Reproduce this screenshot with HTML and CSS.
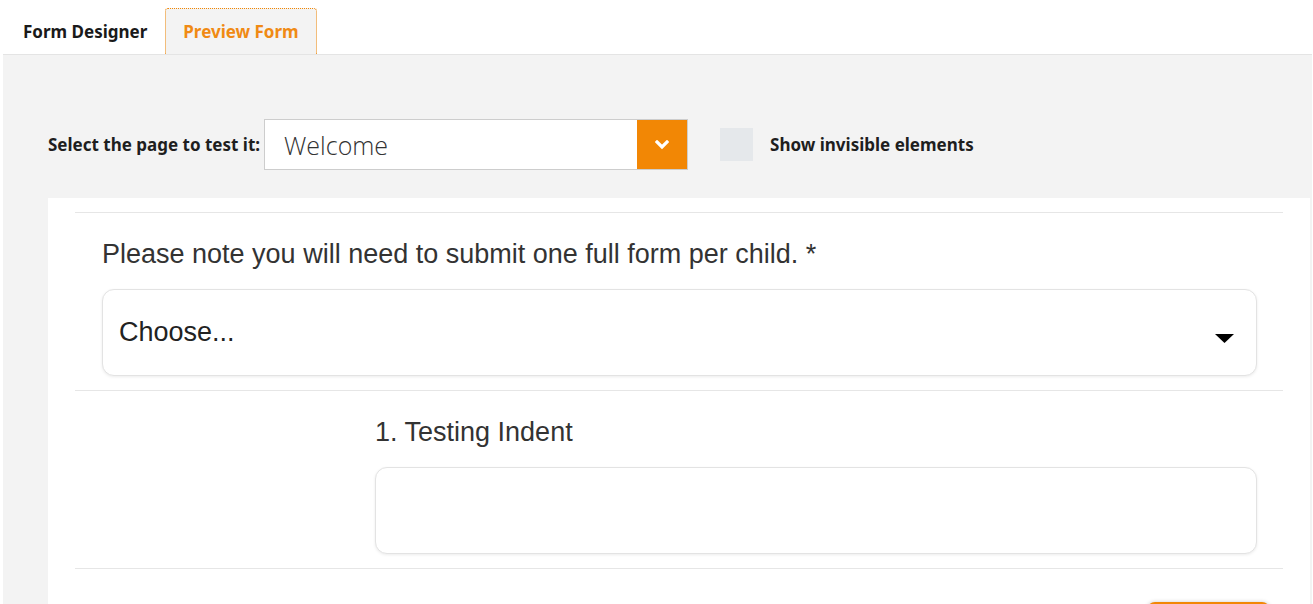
FILE: index.html
```html
<!DOCTYPE html>
<html>
<head>
<meta charset="utf-8">
<link rel="stylesheet" href="styles.css">
</head>
<body>
<div class="app">
  <div class="tabs">
    <div class="tab">Form Designer</div>
    <div class="tab active">Preview Form</div>
  </div>
  <div class="panel">
    <div class="toolbar">
      <span class="tool-label">Select the page to test it:</span>
      <div class="page-select">
        <span class="page-value">Welcome</span>
        <span class="page-btn">
          <svg width="14" height="10" viewBox="0 0 14 10"><path d="M2 2 L7 7 L12 2" fill="none" stroke="#fff" stroke-width="3.2" stroke-linecap="square"/></svg>
        </span>
      </div>
      <span class="check"></span>
      <span class="tool-label">Show invisible elements</span>
    </div>
    <div class="card">
      <div class="row">
        <div class="q-title">Please note you will need to submit one full form per child. *</div>
        <div class="dropdown">
          <span>Choose...</span>
          <svg class="caret" width="19" height="9" viewBox="0 0 19 9"><path d="M0 0 H19 L9.5 9 Z" fill="#000"/></svg>
        </div>
      </div>
      <div class="row indent">
        <div class="q-title">1. Testing Indent</div>
        <div class="text-input"></div>
      </div>
      <div class="row footer">
        <div class="next-btn"></div>
      </div>
    </div>
  </div>
</div>
</body>
</html>
```
FILE: styles.css
```css
html, body {
  margin: 0;
  padding: 0;
  background: #fff;
  overflow: hidden;
}
body {
  font-family: "Noto Sans", "Open Sans", sans-serif;
  color: #1e1e1e;
}
.app {
  margin-left: 3px;
  width: 1309px;
  height: 604px;
  display: flex;
  flex-direction: column;
}
.tabs {
  display: flex;
  align-items: flex-end;
  height: 54px;
  border-bottom: 1px solid #e4e4e4;
  padding-left: 5px;
}
.tab {
  height: 46px;
  box-sizing: border-box;
  display: flex;
  align-items: center;
  padding: 0 15px;
  font-size: 17px;
  font-weight: 700;
  color: #1a1a1a;
  margin-right: 3px;
}
.tab.active {
  background: #f3f3f3;
  color: #f08a14;
  border: 1px dotted #f28705;
  border-bottom: none;
  border-radius: 3px 3px 0 0;
  padding: 0 17px;
}
.panel {
  flex: 1;
  background: #f3f3f3;
  padding-left: 45px;
  display: flex;
  flex-direction: column;
  min-height: 0;
}
.toolbar {
  display: flex;
  align-items: center;
  height: 51px;
  margin-top: 64px;
  margin-bottom: 28px;
}
.tool-label {
  font-size: 17px;
  font-weight: 700;
  color: #1e1e1e;
}
.page-select {
  margin-left: 4px;
  width: 424px;
  height: 51px;
  box-sizing: border-box;
  border: 1px solid #cdcdcd;
  background: #fff;
  display: flex;
  align-items: center;
}
.page-value {
  flex: 1;
  padding-left: 19px;
  font-family: "Open Sans", sans-serif;
  font-weight: 300;
  font-size: 25px;
  color: #333;
}
.page-btn {
  width: 50px;
  height: 49px;
  background: #f28705;
  display: flex;
  align-items: center;
  justify-content: center;
}
.check {
  width: 33px;
  height: 33px;
  background: #e5e8eb;
  margin-left: 32px;
  margin-right: 17px;
}
.card {
  flex: 1;
  background: #fff;
  padding: 14px 27px 0 27px;
  margin-right: 2px;
  min-height: 0;
}
.row {
  border-top: 1px solid #e6e6e6;
  padding: 26px 26px 14px 27px;
}
.row.indent {
  padding-left: 300px;
}
.q-title {
  font-family: "Liberation Sans", Arial, sans-serif;
  font-size: 27px;
  line-height: 31px;
  color: #333;
  margin-bottom: 19px;
}
.dropdown, .text-input {
  height: 87px;
  box-sizing: border-box;
  border: 1px solid #e3e3e3;
  border-radius: 12px;
  box-shadow: 0 1px 3px rgba(0,0,0,0.08);
  background: #fff;
}
.dropdown {
  display: flex;
  align-items: center;
  justify-content: space-between;
  padding: 0 22px 0 16px;
  font-family: "Liberation Sans", Arial, sans-serif;
  font-size: 27px;
  color: #222;
}
.caret {
  margin-top: 12px;
}
.row.footer {
  display: flex;
  justify-content: flex-end;
  padding: 33px 13px 0 0;
}
.next-btn {
  width: 123px;
  height: 40px;
  background: #f28705;
  border-radius: 8px;
  box-shadow: 0 0 4px rgba(0,0,0,0.2);
}
```
